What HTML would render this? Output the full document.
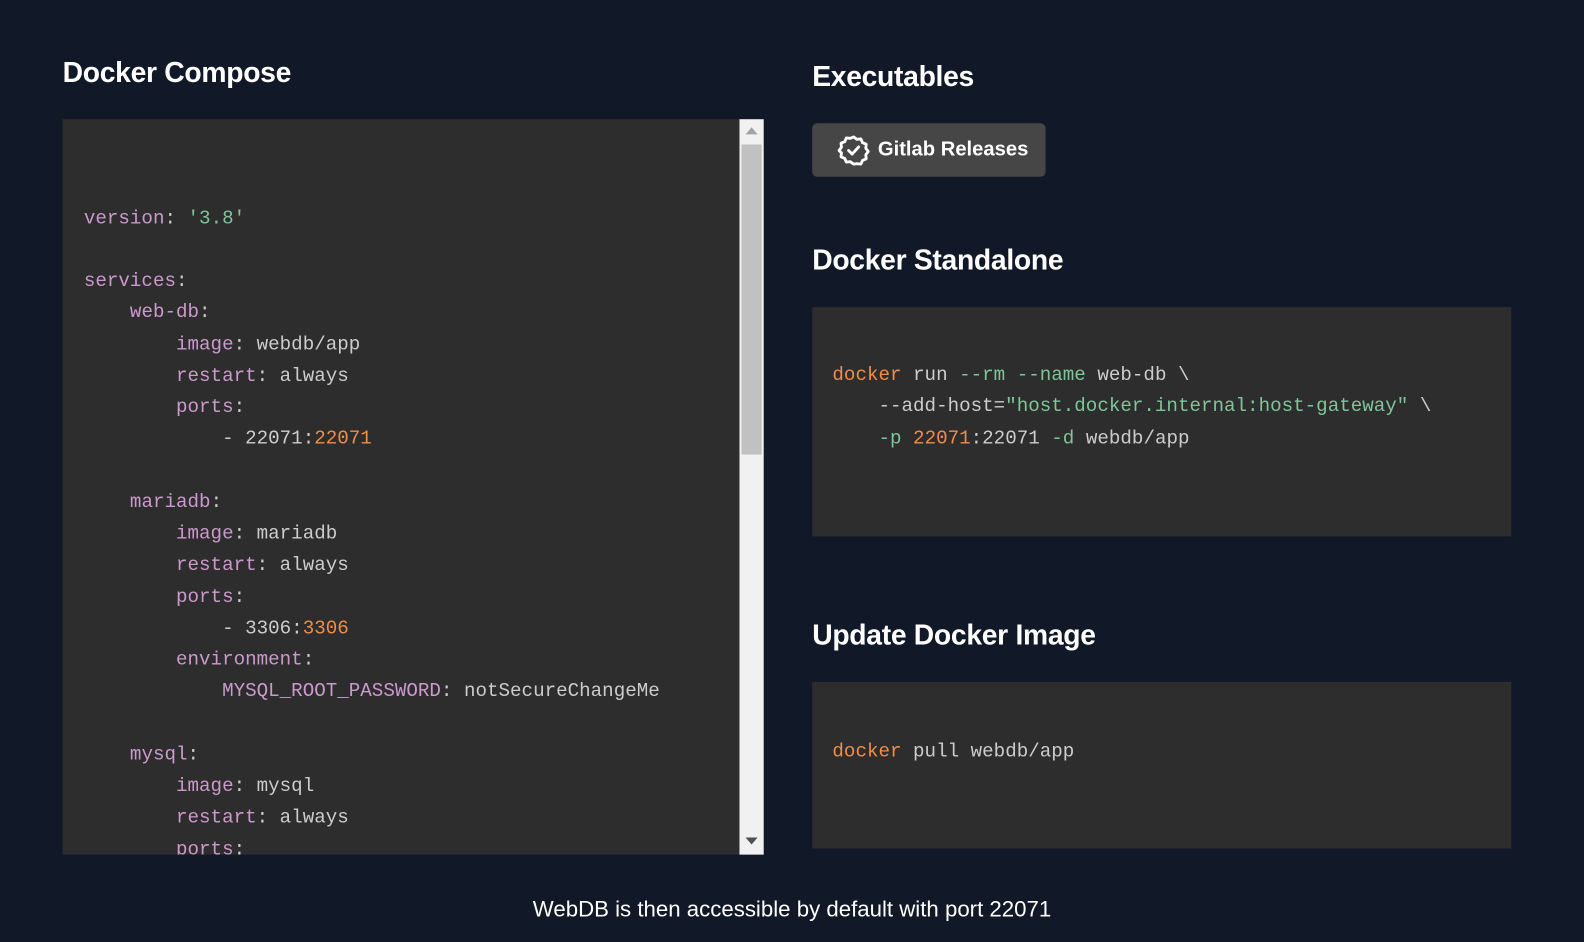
<!DOCTYPE html>
<html><head><meta charset="utf-8">
<style>
*{margin:0;padding:0;box-sizing:border-box}
html,body{width:1584px;height:942px;background:#111827;overflow:hidden;font-family:"Liberation Sans",sans-serif;color:#fff}
#w{position:absolute;left:0;top:0;width:1568px;height:932px;transform:scale(1.0102);transform-origin:0 0}
h2{position:absolute;font-size:28px;font-weight:bold;color:#fff;letter-spacing:-0.3px}
pre{font-family:"Liberation Mono",monospace;font-size:19px;line-height:31.25px;color:#ccc}
.box{position:absolute;background:#2d2d2d;overflow:hidden}
.k{color:#cc99cd}.s{color:#7ec699}.n{color:#f08d49}
.sb{position:absolute;left:732px;top:118px;width:24px;height:728px;background:#f1f1f1}
.th{position:absolute;left:2px;top:25px;width:20px;height:307px;background:#c1c1c1}
.btn{position:absolute;left:804px;top:122px;width:231px;height:53px;background:#464646;border-radius:5px;display:flex;align-items:center;padding-left:24px;font-size:20px;font-weight:bold;color:#fff}
.btn svg{margin-right:7px}
.foot{position:absolute;left:0;width:1568px;top:887px;text-align:center;font-size:22px;color:#fff}
</style></head><body><div id="w">
<h2 style="left:62px;top:56px">Docker Compose</h2>
<div class="box" style="left:62px;top:118px;width:670px;height:728px">
<pre style="padding:20px 21px">


<span class="k">version</span>: <span class="s">'3.8'</span>

<span class="k">services</span>:
    <span class="k">web-db</span>:
        <span class="k">image</span>: webdb/app
        <span class="k">restart</span>: always
        <span class="k">ports</span>:
            - 22071:<span class="n">22071</span>

    <span class="k">mariadb</span>:
        <span class="k">image</span>: mariadb
        <span class="k">restart</span>: always
        <span class="k">ports</span>:
            - 3306:<span class="n">3306</span>
        <span class="k">environment</span>:
            <span class="k">MYSQL_ROOT_PASSWORD</span>: notSecureChangeMe

    <span class="k">mysql</span>:
        <span class="k">image</span>: mysql
        <span class="k">restart</span>: always
        <span class="k">ports</span>:
</pre></div>
<div class="sb"><div class="th"></div>
<svg style="position:absolute;left:6px;top:8px" width="12" height="8"><polygon points="6,0 12,7 0,7" fill="#a3a3a3"/></svg>
<svg style="position:absolute;left:6px;top:711px" width="12" height="8"><polygon points="0,0 12,0 6,7" fill="#505050"/></svg>
</div>

<h2 style="left:804px;top:60px">Executables</h2>
<div class="btn"><svg width="34" height="34" viewBox="0 0 24 24" fill="none" stroke="#fff" stroke-width="2" stroke-linecap="round" stroke-linejoin="round"><path d="M12 2.5l2.3 1.7 2.8-.3 1.1 2.6 2.6 1.1-.3 2.8 1.7 2.3-1.7 2.3.3 2.8-2.6 1.1-1.1 2.6-2.8-.3L12 21.5l-2.3-1.7-2.8.3-1.1-2.6-2.6-1.1.3-2.8L1.8 12l1.7-2.3-.3-2.8 2.6-1.1 1.1-2.6 2.8.3z"/><path d="M8.5 12l2.5 2.5 4.5-5"/></svg>Gitlab Releases</div>

<h2 style="left:804px;top:242px">Docker Standalone</h2>
<div class="box" style="left:804px;top:304px;width:692px;height:227px">
<pre style="padding:52px 20px"><span class="n">docker</span> run <span class="s">--rm</span> <span class="s">--name</span> web-db \
    --add-host=<span class="s">"host.docker.internal:host-gateway"</span> \
    <span class="s">-p</span> <span class="n">22071</span>:22071 <span class="s">-d</span> webdb/app</pre></div>

<h2 style="left:804px;top:613px">Update Docker Image</h2>
<div class="box" style="left:804px;top:675px;width:692px;height:165px">
<pre style="padding:54px 20px"><span class="n">docker</span> pull webdb/app</pre></div>

<div class="foot">WebDB is then accessible by default with port 22071</div>
</div></body></html>
